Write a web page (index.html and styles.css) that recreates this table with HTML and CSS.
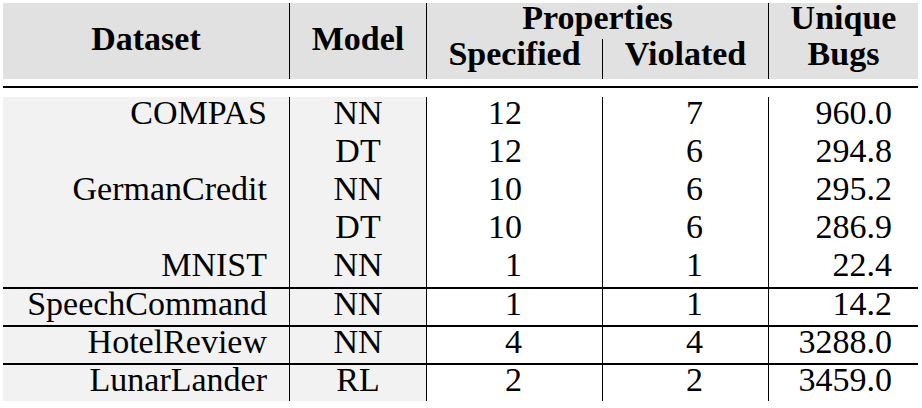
FILE: index.html
```html
<!DOCTYPE html>
<html>
<head>
<meta charset="utf-8">
<link rel="stylesheet" href="styles.css">
</head>
<body>
<div class="wrap">
  <table class="tbl head">
    <colgroup><col class="w1"><col class="w2"><col class="w3"><col class="w4"><col class="w5"></colgroup>
    <tr class="r1">
      <th rowspan="2" class="span">Dataset</th>
      <th rowspan="2" class="span vl">Model</th>
      <th colspan="2" class="vl">Properties</th>
      <th class="vl">Unique</th>
    </tr>
    <tr class="r2">
      <th class="vl">Specified</th>
      <th class="vl">Violated</th>
      <th class="vl">Bugs</th>
    </tr>
  </table>
  <div class="rule"></div>
  <table class="tbl data">
    <colgroup><col class="w1"><col class="w2"><col class="w3"><col class="w4"><col class="w5"></colgroup>
    <tr><td class="ds">COMPAS</td><td class="md vl">NN</td><td class="sp vl">12</td><td class="vi vl">7</td><td class="ub vl">960.0</td></tr>
    <tr><td class="ds"></td><td class="md vl">DT</td><td class="sp vl">12</td><td class="vi vl">6</td><td class="ub vl">294.8</td></tr>
    <tr><td class="ds">GermanCredit</td><td class="md vl">NN</td><td class="sp vl">10</td><td class="vi vl">6</td><td class="ub vl">295.2</td></tr>
    <tr><td class="ds"></td><td class="md vl">DT</td><td class="sp vl">10</td><td class="vi vl">6</td><td class="ub vl">286.9</td></tr>
    <tr><td class="ds">MNIST</td><td class="md vl">NN</td><td class="sp vl">1</td><td class="vi vl">1</td><td class="ub vl">22.4</td></tr>
    <tr class="sep"><td class="ds">SpeechCommand</td><td class="md vl">NN</td><td class="sp vl">1</td><td class="vi vl">1</td><td class="ub vl">14.2</td></tr>
    <tr class="sep"><td class="ds">HotelReview</td><td class="md vl">NN</td><td class="sp vl">4</td><td class="vi vl">4</td><td class="ub vl">3288.0</td></tr>
    <tr class="sep"><td class="ds">LunarLander</td><td class="md vl">RL</td><td class="sp vl">2</td><td class="vi vl">2</td><td class="ub vl">3459.0</td></tr>
  </table>
</div>
</body>
</html>
```

FILE: styles.css
```css
body {
  margin: 0;
  background: #ffffff;
  color: #000000;
  font-family: "Times New Roman", "Liberation Serif", "Tinos", serif;
}

.wrap {
  padding: 3px 0 0 3px;
  width: 915px;
}

.tbl {
  font-family: "Times New Roman", "Liberation Serif", "Tinos", serif;
  border-collapse: separate;
  border-spacing: 0;
  table-layout: fixed;
  width: 915px;
}

.w1 { width: 286px; }
.w2 { width: 137px; }
.w3 { width: 176px; }
.w4 { width: 166px; }
.w5 { width: 150px; }

.vl { border-left: 1px solid #000000; }

.head th {
  background: #e1e1e1;
  font-weight: bold;
  font-size: 34px;
  line-height: 29px;
  padding: 0;
  text-align: center;
  vertical-align: top;
}

.head .r1 { height: 36px; }
.head .r2 { height: 40px; }

.head th.span {
  vertical-align: middle;
  padding-bottom: 5px;
}

.rule {
  width: 915px;
  height: 2px;
  background: #000000;
  margin: 7px 0 9px;
}

.data tr { height: 38px; }

.data td {
  font-size: 34px;
  line-height: 29px;
  padding: 1px 0 0;
  vertical-align: top;
  white-space: nowrap;
}

.data tr.sep td {
  border-top: 2px solid #000000;
  padding-top: 0;
}

.data .ds {
  background: #f2f2f2;
  text-align: right;
  padding-right: 22px;
}

.data .md {
  background: #f2f2f2;
  text-align: center;
}

.data .sp {
  text-align: right;
  padding-right: 80px;
}

.data .vi {
  text-align: right;
  padding-right: 65px;
}

.data .ub {
  text-align: right;
  padding-right: 26px;
}
```
